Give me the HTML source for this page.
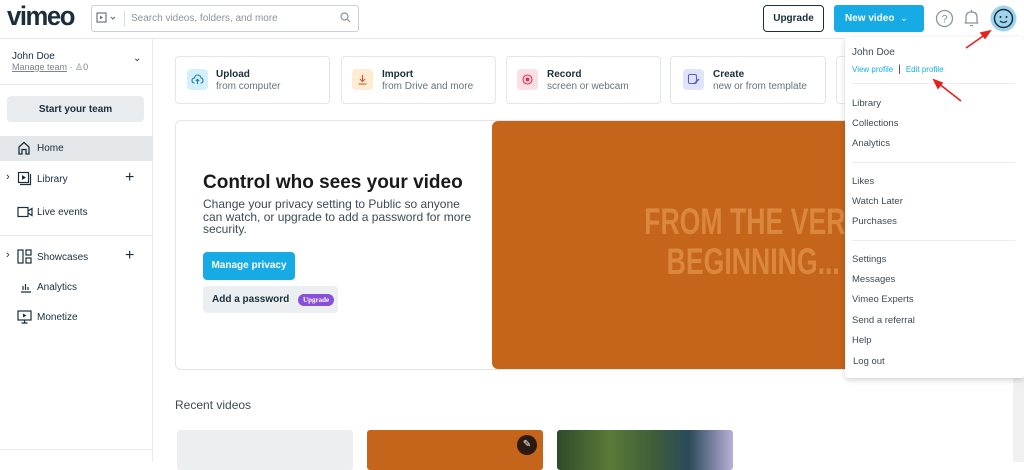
<!DOCTYPE html>
<html><head><meta charset="utf-8"><style>
*{box-sizing:border-box;margin:0;padding:0}
body{width:1024px;height:462px;overflow:hidden;background:#fff;font-family:"Liberation Sans",Arial,sans-serif;color:#1a2e3b;position:relative}
.a{position:absolute}
.hdr{left:0;top:0;width:1024px;height:39px;border-bottom:1px solid #e3e8ec;background:#fff}
.side{left:0;top:39px;width:153px;height:423px;border-right:1px solid #e8ecef}
.nav{font-size:10px;color:#1a2e3b}
.card{border:1px solid #e1e6ea;border-radius:4px;background:#fff}
.ic{width:21px;height:21px;border-radius:4px}
.t1{font-size:10px;font-weight:bold;color:#1a2e3b}
.t2{font-size:10px;color:#66737d}
.dd{font-size:9.5px;color:#3e4b55;left:852px}
</style></head><body>
<div class="a hdr"></div>
<div class="a" style="left:7px;top:1px;font-size:27px;font-weight:bold;letter-spacing:-1.5px;color:#1a2e3b;transform:scaleX(.95);transform-origin:left">vimeo</div>
<div class="a" style="left:91px;top:5px;width:268px;height:27px;border:1px solid #c9d0d6;border-radius:3px"></div>
<svg class="a" style="left:96px;top:12px" width="24" height="13"><rect x="1" y="1" width="9" height="9" fill="none" stroke="#6a7780" stroke-width="1.2"/><path d="M4 3.5 L7 5.5 L4 7.5Z" fill="#6a7780"/><path d="M15 5 L17 7 L19 5" fill="none" stroke="#6a7780" stroke-width="1.2"/></svg>
<div class="a" style="left:124px;top:11px;width:1px;height:15px;background:#d5dbe0"></div>
<div class="a" style="left:131px;top:13px;font-size:10px;color:#8a959d">Search videos, folders, and more</div>
<svg class="a" style="left:340px;top:12px" width="11" height="11"><circle cx="4.5" cy="4.5" r="3.5" fill="none" stroke="#8a959d" stroke-width="1.2"/><path d="M7 7 L10 10" stroke="#8a959d" stroke-width="1.2"/></svg>
<div class="a" style="left:763px;top:5px;width:61px;height:27px;border:1px solid #1a2e3b;border-radius:4px;font-size:10px;font-weight:bold;text-align:center;line-height:25px">Upgrade</div>
<div class="a" style="left:834px;top:5px;width:90px;height:27px;background:#17abe6;border-radius:3px;color:#fff;font-size:10px;font-weight:bold;line-height:27px;padding-left:11px">New video <span style="font-weight:normal;font-size:9px;margin-left:3px">⌄</span></div>
<svg class="a" style="left:935px;top:9px" width="19" height="19"><circle cx="9.5" cy="9.5" r="8" fill="none" stroke="#8a959d" stroke-width="1.3"/><text x="9.5" y="13.5" font-size="11" text-anchor="middle" fill="#8a959d" font-family="Liberation Sans">?</text></svg>
<svg class="a" style="left:963px;top:9px" width="17" height="19"><path d="M3 14 L3 8 Q3 3 8.5 3 Q14 3 14 8 L14 14 Z M1.5 14 L15.5 14 M7 16.5 L10 16.5 M8.5 1 L8.5 3" fill="none" stroke="#8a959d" stroke-width="1.3"/></svg>
<svg class="a" style="left:990px;top:5px" width="27" height="27"><circle cx="13.5" cy="13.5" r="13" fill="#9fd4ef"/><circle cx="13.5" cy="13.5" r="9" fill="none" stroke="#1a2e3b" stroke-width="1.5"/><circle cx="10.5" cy="12" r="1" fill="#1a2e3b"/><circle cx="16.5" cy="12" r="1" fill="#1a2e3b"/><path d="M10 16 Q13.5 19 17 16" fill="none" stroke="#1a2e3b" stroke-width="1.2"/></svg>

<div class="a side"></div>
<div class="a" style="left:12px;top:51px;font-size:10px;color:#1a2e3b">John Doe</div>
<div class="a" style="left:12px;top:62px;font-size:9px;color:#7b868e"><span style="text-decoration:underline">Manage team</span> · ♙0</div>
<div class="a" style="left:133px;top:53px;font-size:10px">⌄</div>
<div class="a" style="left:0;top:84px;width:153px;height:1px;background:#e8ecef"></div>
<div class="a" style="left:7px;top:96px;width:137px;height:26px;background:#e9ecee;border-radius:4px;font-size:10px;font-weight:bold;text-align:center;line-height:27px">Start your team</div>
<div class="a" style="left:0;top:136px;width:153px;height:25px;background:#e4e7e9"></div>
<svg class="a" style="left:17px;top:141px" width="14" height="14"><path d="M2 13 L2 6 L7 1.5 L12 6 L12 13 L9 13 L9 8.5 L5 8.5 L5 13 Z" fill="none" stroke="#1a2e3b" stroke-width="1.3"/></svg>
<div class="a nav" style="left:37px;top:143px">Home</div>
<div class="a nav" style="left:6px;top:171px;font-size:11px">›</div>
<svg class="a" style="left:17px;top:171px" width="15" height="15"><rect x="1.5" y="1.5" width="10" height="10" fill="none" stroke="#1a2e3b" stroke-width="1.2"/><path d="M5 4 L9 6.5 L5 9Z" fill="#1a2e3b"/><path d="M13.5 3 L13.5 13.5 L3 13.5" fill="none" stroke="#1a2e3b" stroke-width="1.2"/></svg>
<div class="a nav" style="left:37px;top:174px">Library</div>
<div class="a" style="left:125px;top:169px;font-size:16px">+</div>
<svg class="a" style="left:17px;top:206px" width="16" height="12"><rect x="1" y="1.5" width="10" height="9" fill="none" stroke="#1a2e3b" stroke-width="1.2"/><path d="M11 5 L15 2.5 L15 9.5 L11 7" fill="none" stroke="#1a2e3b" stroke-width="1.2"/></svg>
<div class="a nav" style="left:37px;top:207px">Live events</div>
<div class="a" style="left:0;top:235px;width:153px;height:1px;background:#e8ecef"></div>
<div class="a nav" style="left:6px;top:249px;font-size:11px">›</div>
<svg class="a" style="left:17px;top:249px" width="15" height="15"><rect x="1" y="1" width="5" height="13" fill="none" stroke="#1a2e3b" stroke-width="1.2"/><rect x="9" y="1" width="5" height="5" fill="none" stroke="#1a2e3b" stroke-width="1.2"/><rect x="9" y="9" width="5" height="5" fill="none" stroke="#1a2e3b" stroke-width="1.2"/></svg>
<div class="a nav" style="left:37px;top:252px">Showcases</div>
<div class="a" style="left:125px;top:247px;font-size:16px">+</div>
<svg class="a" style="left:20px;top:281px" width="12" height="12"><path d="M1 11 L11 11 M3 9 L3 5 M5.5 9 L5.5 3 M8 9 L8 6" stroke="#1a2e3b" stroke-width="1.2"/></svg>
<div class="a nav" style="left:37px;top:282px">Analytics</div>
<svg class="a" style="left:17px;top:310px" width="15" height="14"><rect x="1" y="1" width="13" height="9" fill="none" stroke="#1a2e3b" stroke-width="1.2"/><path d="M6 3.5 L9.5 5.5 L6 7.5Z" fill="#1a2e3b"/><path d="M7.5 10 L7.5 13 M4.5 13 L10.5 13" stroke="#1a2e3b" stroke-width="1.2"/></svg>
<div class="a nav" style="left:37px;top:312px">Monetize</div>
<div class="a" style="left:0;top:449px;width:153px;height:1px;background:#e8ecef"></div>

<div class="a card" style="left:175px;top:56px;width:155px;height:48px"></div>
<div class="a ic" style="left:187px;top:69px;background:#d6f0fb"></div>
<svg class="a" style="left:191px;top:73px" width="13" height="13"><path d="M3.5 10 Q1 10 1 7.5 Q1 5 3.5 5 Q4 2 6.5 2 Q9.5 2 10 5 Q12 5 12 7.5 Q12 10 9.5 10" fill="none" stroke="#1a7fb0" stroke-width="1.1"/><path d="M6.5 11 L6.5 6.5 M4.8 8 L6.5 6.3 L8.2 8" fill="none" stroke="#1a7fb0" stroke-width="1.1"/></svg>
<div class="a t1" style="left:216px;top:69px">Upload</div><div class="a t2" style="left:216px;top:81px">from computer</div>
<div class="a card" style="left:341px;top:56px;width:155px;height:48px"></div>
<div class="a ic" style="left:352px;top:69px;background:#fdebd3"></div>
<svg class="a" style="left:356px;top:73px" width="13" height="13"><path d="M6.5 2 L6.5 8.5 M4 6 L6.5 8.5 L9 6 M2.5 11 L10.5 11" fill="none" stroke="#c9542a" stroke-width="1.1"/></svg>
<div class="a t1" style="left:382px;top:69px">Import</div><div class="a t2" style="left:382px;top:81px">from Drive and more</div>
<div class="a card" style="left:506px;top:56px;width:155px;height:48px"></div>
<div class="a ic" style="left:517px;top:69px;background:#fde0e5"></div>
<svg class="a" style="left:521px;top:73px" width="13" height="13"><circle cx="6.5" cy="6.5" r="4.5" fill="none" stroke="#e0334d" stroke-width="1.1"/><circle cx="6.5" cy="6.5" r="2" fill="#e0334d"/></svg>
<div class="a t1" style="left:547px;top:69px">Record</div><div class="a t2" style="left:547px;top:81px">screen or webcam</div>
<div class="a card" style="left:670px;top:56px;width:156px;height:48px"></div>
<div class="a ic" style="left:683px;top:69px;background:#e0e3fa"></div>
<svg class="a" style="left:687px;top:73px" width="13" height="13"><rect x="1.5" y="1.5" width="8" height="9" rx="1.5" fill="none" stroke="#5b5fc7" stroke-width="1.1"/><path d="M7 11 L12 6" stroke="#5b5fc7" stroke-width="1.5"/></svg>
<div class="a t1" style="left:713px;top:69px">Create</div><div class="a t2" style="left:713px;top:81px">new or from template</div>
<div class="a card" style="left:836px;top:56px;width:40px;height:48px"></div>

<div class="a card" style="left:175px;top:120px;width:830px;height:250px;border-radius:6px"></div>
<div class="a" style="left:492px;top:121px;width:512px;height:248px;background:#c5641b;border-radius:6px 0 0 6px"></div>
<div class="a" style="left:629px;top:202px;font-size:37px;font-weight:bold;color:#d9883e;line-height:40px;text-align:center;transform:scaleX(.72);transform-origin:left top;white-space:nowrap;width:345px">FROM THE VERY<br>BEGINNING...</div>
<div class="a" style="left:203px;top:172px;font-size:19px;font-weight:bold;color:#1a1a1a">Control who sees your video</div>
<div class="a" style="left:203px;top:198px;width:275px;font-size:12px;line-height:12.5px;color:#3e4b55">Change your privacy setting to Public so anyone can watch, or upgrade to add a password for more security.</div>
<div class="a" style="left:203px;top:252px;width:92px;height:28px;background:#17abe6;border-radius:4px;color:#fff;font-size:10px;font-weight:bold;text-align:center;line-height:28px">Manage privacy</div>
<div class="a" style="left:203px;top:286px;width:135px;height:27px;background:#eceff1;border-radius:4px;font-size:10px;font-weight:bold;line-height:27px;padding-left:9px">Add a password <span style="display:inline-block;margin-left:6px;background:#8a4fd8;color:#fff;font-size:7px;border-radius:7px;padding:0 5px;line-height:12px;font-family:'Liberation Serif',serif">Upgrade</span></div>

<div class="a" style="left:175px;top:398px;font-size:12px;color:#3e4b55">Recent videos</div>
<div class="a" style="left:177px;top:430px;width:176px;height:40px;background:#eceff0;border-radius:3px"></div>
<div class="a" style="left:367px;top:430px;width:176px;height:40px;background:#c5641b;border-radius:3px"></div>
<div class="a" style="left:517px;top:435px;width:20px;height:20px;border-radius:50%;background:#2b1a10;color:#fff;font-size:10px;text-align:center;line-height:20px">✎</div>
<div class="a" style="left:557px;top:430px;width:176px;height:40px;border-radius:3px;background:linear-gradient(90deg,#2f4a2a 0%,#5a7a38 30%,#3e5e3a 55%,#2a4a5a 75%,#b8b0d8 100%)"></div>
<div class="a" style="left:1013px;top:378px;width:11px;height:84px;background:#f0f0f0"></div>

<div class="a" style="left:845px;top:37px;width:179px;height:341px;background:#fff;box-shadow:0 2px 6px rgba(0,0,0,.18);border-radius:3px"></div>
<div class="a dd" style="top:47px;font-size:10px">John Doe</div>
<div class="a" style="left:852px;top:64px;font-size:8px;color:#17abe6">View profile <span style="color:#333;font-size:10px">&nbsp;|&nbsp;</span> Edit profile</div>
<div class="a" style="left:852px;top:83px;width:163px;height:1px;background:#eaecee"></div>
<div class="a dd" style="top:98px">Library</div>
<div class="a dd" style="top:118px">Collections</div>
<div class="a dd" style="top:138px">Analytics</div>
<div class="a" style="left:852px;top:162px;width:163px;height:1px;background:#eaecee"></div>
<div class="a dd" style="top:176px">Likes</div>
<div class="a dd" style="top:196px">Watch Later</div>
<div class="a dd" style="top:216px">Purchases</div>
<div class="a" style="left:852px;top:240px;width:163px;height:1px;background:#eaecee"></div>
<div class="a dd" style="top:254px">Settings</div>
<div class="a dd" style="top:274px">Messages</div>
<div class="a dd" style="top:294px">Vimeo Experts</div>
<div class="a dd" style="top:315px">Send a referral</div>
<div class="a dd" style="top:335px">Help</div>
<div class="a dd" style="top:356px;left:853px">Log out</div>

<svg class="a" style="left:0;top:0" width="1024" height="462"><g stroke="#e8201c" stroke-width="1.6" fill="#e8201c"><path d="M966 48 L986 34"/><path d="M990 31 L981 33 L985 38Z"/><path d="M961 101 L938 83"/><path d="M934 80 L938 88 L942 83Z"/></g></svg>
</body></html>
